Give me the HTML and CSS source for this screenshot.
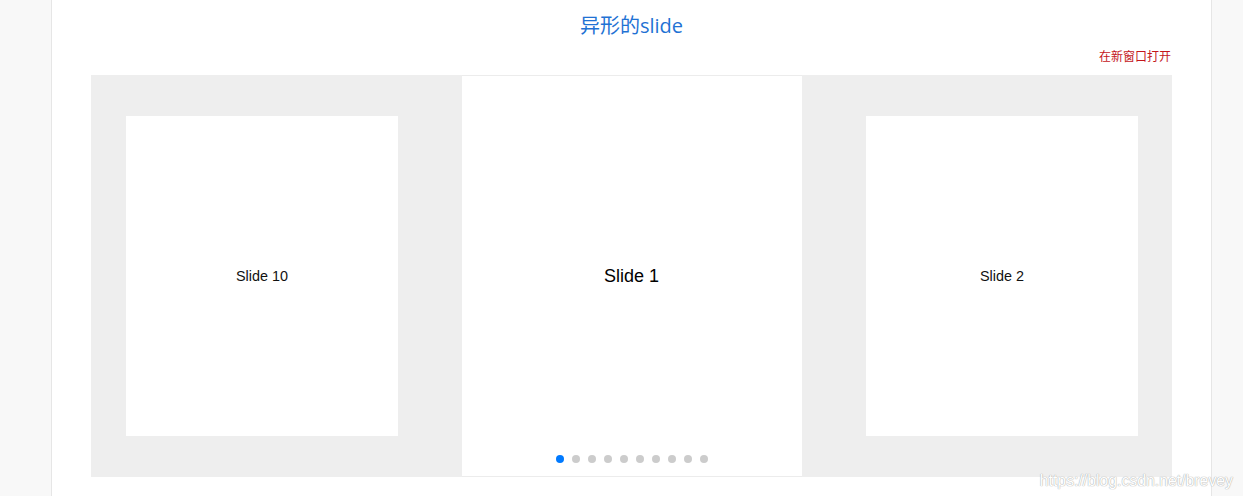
FILE: index.html
```html
<!DOCTYPE html>
<html lang="zh-CN">
<head>
<meta charset="utf-8">
<title>异形的slide</title>
<link rel="stylesheet" href="styles.css">
</head>
<body>
<div class="page">
  <h1 class="title">异形的slide</h1>
  <div class="link-row"><a class="open-link" href="#">在新窗口打开</a></div>
  <div class="swiper">
    <div class="slide side">Slide 10</div>
    <div class="slide active">Slide 1</div>
    <div class="slide side">Slide 2</div>
    <div class="pagination">
      <span class="dot on"></span><span class="dot"></span><span class="dot"></span><span class="dot"></span><span class="dot"></span><span class="dot"></span><span class="dot"></span><span class="dot"></span><span class="dot"></span><span class="dot"></span>
    </div>
  </div>
</div>
<div class="watermark">https://blog.csdn.net/brevey</div>
</body>
</html>
```

FILE: styles.css
```css
html, body {
  margin: 0;
  padding: 0;
  height: 100%;
  overflow: hidden;
}
body {
  background: #f8f8f8;
  font-family: "Liberation Sans", Arial, "Noto Sans CJK SC", sans-serif;
}
.page {
  margin-left: 51px;
  width: 1161px;
  height: 496px;
  background: #fff;
  border-left: 1px solid #e6e6e6;
  border-right: 1px solid #e6e6e6;
  padding: 0 39px;
  box-sizing: border-box;
}
.title {
  margin: 0;
  padding-top: 12px;
  font-size: 20px;
  line-height: 28px;
  font-weight: normal;
  text-align: center;
  color: #1f72d4;
  font-family: "Open Sans", "Noto Sans CJK SC", sans-serif;
}
.link-row {
  margin-top: 8px;
  height: 16px;
  line-height: 16px;
  text-align: right;
  padding-right: 1px;
}
.open-link {
  font-size: 12px;
  color: #c4161c;
  text-decoration: none;
  font-family: "Noto Sans CJK SC", sans-serif;
}
.swiper {
  position: relative;
  margin-top: 11px;
  height: 402px;
  background: #eee;
  display: flex;
  justify-content: center;
  align-items: center;
  gap: 30px;
  overflow: hidden;
}
.slide {
  flex-shrink: 0;
  width: 340px;
  height: 400px;
  background: #fff;
  display: flex;
  align-items: center;
  justify-content: center;
  font-size: 18px;
  color: #000;
  box-sizing: border-box;
}
.slide.side {
  transform: scale(0.8);
  color: #111;
}
.slide.active {
  height: 402px;
  border-top: 1px solid #ececec;
  border-bottom: 1px solid #ececec;
}
.pagination {
  position: absolute;
  left: 1px;
  right: 0;
  bottom: 14px;
  display: flex;
  justify-content: center;
  gap: 8px;
}
.dot {
  width: 8px;
  height: 8px;
  border-radius: 50%;
  background: #ccc;
}
.dot.on {
  background: #007aff;
}
.watermark {
  position: absolute;
  right: 10px;
  bottom: 6px;
  font-size: 15.8px;
  color: #fff;
  text-shadow: 0 0 1px #aaa, 0 0 1px #aaa;
}
```
